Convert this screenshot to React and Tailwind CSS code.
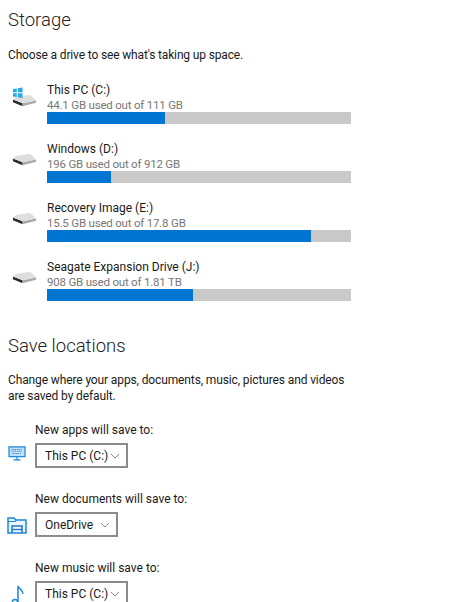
import React from "react";

function DriveIcon({ win }) {
  return (
    <svg width="25" height="26" viewBox="0 0 26 26" className="shrink-0">
      <path d="M1 14.5 L11 18.5 L11 21.5 L1 17.5 Z" fill="#2a2a2a" />
      <path d="M11 18.5 L25 15.5 L25 18 L11 21.5 Z" fill="#a8a8a8" />
      <path d="M4 12 L19 9.5 L25 15.5 L11 18.5 L1 14.5 Z" fill="#dedede" />
      {win && (
        <g fill="#29a8ea">
          <path d="M1 3.6 L5 3 V7 H1 Z" />
          <path d="M6 2.9 L11 2.1 V7 H6 Z" />
          <path d="M1 8 H5 V12 L1 11.4 Z" />
          <path d="M6 8 H11 V12.9 L6 12.1 Z" />
        </g>
      )}
    </svg>
  );
}

function Drive({ name, used, pct }) {
  return (
    <div className="flex h-[59px] w-[351px]">
      <div className="w-[47px] pl-[12px] pt-[3px]">
        <DriveIcon win={name.startsWith("This")} />
      </div>
      <div className="w-[304px] flex flex-col">
        <div className="text-[12px] leading-[16px] text-[#1a1a1a]">{name}</div>
        <div className="text-[11.5px] leading-[13px] tracking-[-0.2px] text-[#777777] mt-px">{used}</div>
        <div className="h-[12px] bg-[#c9c9c9]">
          <div className="h-full bg-[#0075d2]" style={{ width: pct + "px" }} />
        </div>
      </div>
    </div>
  );
}

function Chevron() {
  return (
    <svg width="10" height="6" viewBox="0 0 10 6" className="shrink-0">
      <path d="M1 1 L5 5 L9 1" fill="none" stroke="#8a8a8a" strokeWidth="1" />
    </svg>
  );
}

function Select({ label, width, icon }) {
  return (
    <div className="flex flex-col">
      <div className="pl-[35px] text-[12px] leading-[16px] text-[#1a1a1a]">{label}</div>
      <div className="flex items-center mt-[5px]">
        <div className="w-[35px] shrink-0">{icon}</div>
        <div className={`h-[25px] ${width} border-2 border-[#8c8c8c] flex items-center justify-between pl-[8px] pr-[6px] text-[12px] text-[#1a1a1a] whitespace-nowrap`}>
          <span>{label.includes("documents") ? "OneDrive" : "This PC (C:)"}</span>
          <Chevron />
        </div>
      </div>
    </div>
  );
}

const Monitor = (
  <svg width="18" height="16" viewBox="0 0 20 18" className="ml-[8px] -mt-[3px]">
    <rect x="1" y="1" width="18" height="11" fill="#bfe0f7" stroke="#1f88d8" strokeWidth="1.4" />
    <path d="M4 4h12M4 6h12M5 8.5h10" stroke="#1f78c8" strokeWidth="1.2" strokeDasharray="1 1" />
    <path d="M10 12v3M6 15.5h8" stroke="#1f88d8" strokeWidth="1.4" />
  </svg>
);

const Folder = (
  <svg width="20" height="18" viewBox="0 0 20 18" className="ml-[7px]">
    <path d="M1 2 H7 L9 4 H19 V17 H1 Z" fill="#e9f4fc" stroke="#1f88d8" strokeWidth="1.5" />
    <path d="M1 5.5 H8 L9.5 4" fill="none" stroke="#1f88d8" strokeWidth="1.2" />
    <path d="M5 17 V10 H15 V17" fill="none" stroke="#1f78c8" strokeWidth="1.5" />
    <path d="M5 13.5 H15" stroke="#1f78c8" strokeWidth="1.3" />
  </svg>
);

const Note = (
  <svg width="14" height="22" viewBox="0 0 14 22" className="ml-[11px] mt-[2px] overflow-visible">
    <circle cx="4" cy="18" r="2.6" fill="none" stroke="#1f88d8" strokeWidth="1.5" />
    <path d="M7 18 V2 C8 5 12 6 12 10" fill="none" stroke="#1f88d8" strokeWidth="1.5" />
  </svg>
);

export default function App() {
  return (
    <div className="w-[474px] h-[602px] overflow-hidden bg-white pl-2 font-['Roboto','Open_Sans',sans-serif]">
      <h1 className="text-[18.5px] leading-[26px] pt-[7px] text-[#222222] box-content font-light">Storage</h1>
      <p className="text-[12px] leading-[16px] mt-[14px] tracking-[-0.15px] text-[#1a1a1a]">Choose a drive to see what's taking up space.</p>
      <div className="mt-[19px] -ml-2 flex flex-col w-[351px]">
        <Drive name="This PC (C:)" used="44.1 GB used out of 111 GB" pct={118} />
        <Drive name="Windows (D:)" used="196 GB used out of 912 GB" pct={64} />
        <Drive name="Recovery Image (E:)" used="15.5 GB used out of 17.8 GB" pct={264} />
        <Drive name="Seagate Expansion Drive (J:)" used="908 GB used out of 1.81 TB" pct={146} />
      </div>
      <h2 className="text-[18.5px] leading-[26px] mt-[15px] text-[#222222] font-light">Save locations</h2>
      <p className="text-[12px] leading-[16px] mt-[13px] w-[350px] tracking-[-0.12px] text-[#1a1a1a]">Change where your apps, documents, music, pictures and videos are saved by default.</p>
      <div className="mt-[18px] -ml-2 flex flex-col gap-[23px]">
        <Select label="New apps will save to:" width="w-[93px]" icon={Monitor} />
        <Select label="New documents will save to:" width="w-[83px]" icon={Folder} />
        <Select label="New music will save to:" width="w-[93px]" icon={Note} />
      </div>
    </div>
  );
}
